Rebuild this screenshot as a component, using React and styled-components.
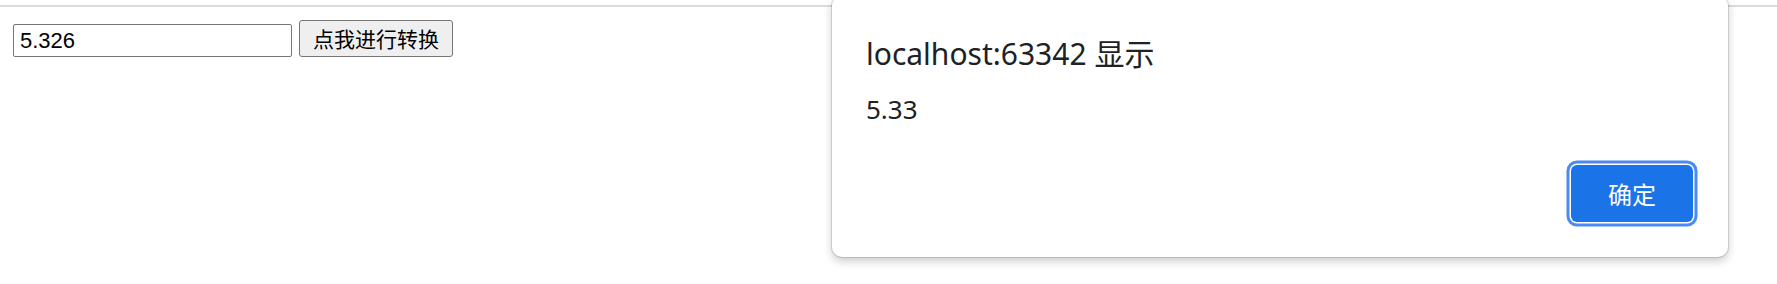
import styled, { createGlobalStyle } from 'styled-components'

const GlobalStyle = createGlobalStyle`
  html, body {
    margin: 0;
    padding: 0;
    background: #ffffff;
    overflow: hidden;
  }
  body {
    width: 1777px;
    height: 284px;
    position: relative;
  }
`

const Page = styled.div`
  position: relative;
  width: 1777px;
  height: 284px;
`

const TopRule = styled.div`
  height: 5px;
  border-bottom: 2px solid #dadada;
`

const FormRow = styled.div`
  display: flex;
  align-items: flex-end;
  gap: 7px;
  padding: 13px 0 0 13px;
`

const NumberInput = styled.input`
  box-sizing: border-box;
  width: 279px;
  height: 33px;
  margin: 0;
  padding: 0 6px;
  border: 1.5px solid #767676;
  border-radius: 2px;
  font-family: 'Liberation Sans', Arial, sans-serif;
  font-size: 22px;
  color: #000;
  background: #fff;
  outline: none;
`

const ConvertButton = styled.button`
  box-sizing: border-box;
  height: 37px;
  margin: 0;
  padding: 0 13px;
  border: 1.5px solid #767676;
  border-radius: 3px;
  background: #efefef;
  font-family: 'Noto Sans CJK SC', 'Noto Sans', sans-serif;
  font-size: 21px;
  line-height: 1;
  color: #000;
`

const Dialog = styled.div`
  position: absolute;
  left: 832px;
  top: -4px;
  width: 896px;
  box-sizing: border-box;
  padding: 40px 35px 35px 34px;
  background: #fff;
  border-radius: 10px;
  box-shadow: 0 0 0 1px rgba(0, 0, 0, 0.12), 0 4px 10px rgba(0, 0, 0, 0.22);
  font-family: 'Noto Sans', 'Noto Sans CJK SC', sans-serif;
  color: #202124;
`

const Title = styled.div`
  font-size: 30px;
  line-height: 36px;
`

const Message = styled.div`
  margin-top: 21px;
  font-size: 26px;
  line-height: 32px;
`

const Actions = styled.div`
  display: flex;
  justify-content: flex-end;
  margin-top: 40px;
`

const OkButton = styled.button`
  box-sizing: border-box;
  width: 122px;
  height: 57px;
  border: none;
  border-radius: 6px;
  background: #1b73e8;
  color: #fff;
  font-family: 'Noto Sans CJK SC', sans-serif;
  font-size: 24px;
  box-shadow: 0 0 0 1.5px #fff, 0 0 0 4.5px #4a8af4;
`

export default function App() {
  return (
    <Page>
      <GlobalStyle />
      <TopRule />
      <FormRow>
        <NumberInput type="text" defaultValue="5.326" />
        <ConvertButton type="button">点我进行转换</ConvertButton>
      </FormRow>
      <Dialog>
        <Title>localhost:63342 显示</Title>
        <Message>5.33</Message>
        <Actions>
          <OkButton type="button">确定</OkButton>
        </Actions>
      </Dialog>
    </Page>
  )
}
